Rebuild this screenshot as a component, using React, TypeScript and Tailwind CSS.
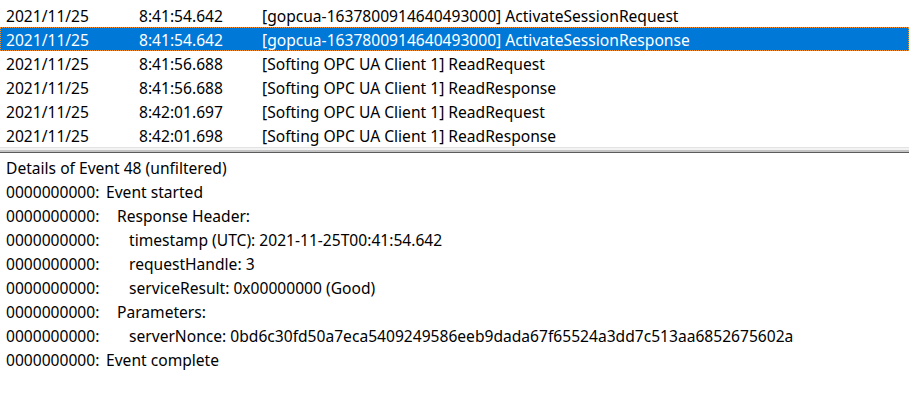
import React from "react";

const rows = [
  ["2021/11/25", "8:41:54.642", "[gopcua-1637800914640493000] ActivateSessionRequest"],
  ["2021/11/25", "8:41:54.642", "[gopcua-1637800914640493000] ActivateSessionResponse"],
  ["2021/11/25", "8:41:56.688", "[Softing OPC UA Client 1] ReadRequest"],
  ["2021/11/25", "8:41:56.688", "[Softing OPC UA Client 1] ReadResponse"],
  ["2021/11/25", "8:42:01.697", "[Softing OPC UA Client 1] ReadRequest"],
  ["2021/11/25", "8:42:01.698", "[Softing OPC UA Client 1] ReadResponse"],
];

const details: [number, string][] = [
  [0, "Event started"],
  [1, "Response Header:"],
  [2, "timestamp (UTC): 2021-11-25T00:41:54.642"],
  [2, "requestHandle: 3"],
  [2, "serviceResult: 0x00000000 (Good)"],
  [1, "Parameters:"],
  [2, "serverNonce: 0bd6c30fd50a7eca5409249586eeb9dada67f65524a3dd7c513aa6852675602a"],
  [0, "Event complete"],
];

export default function App() {
  return (
    <div
      className="w-[909px] h-[400px] bg-white text-black text-[15.6px] overflow-hidden"
      style={{ fontFamily: '"Noto Sans", "Noto Sans CJK SC", sans-serif' }}
    >
      <div className="pt-[3px]">
        {rows.map((r, i) => {
          const sel = i === 1;
          return (
            <div
              key={i}
              className={
                "h-[24px] pt-[4px] flex items-center whitespace-nowrap " +
                (sel
                  ? "bg-[#0078d7] text-white border border-dotted border-[#f5902a]"
                  : "border border-transparent")
              }
            >
              <div className="w-[138px] pl-[5px] shrink-0">{r[0]}</div>
              <div className="w-[123px] shrink-0">{r[1]}</div>
              <div>{r[2]}</div>
            </div>
          );
        })}
      </div>
      <div className="flex flex-col">
        <div className="h-[1px] bg-[#e3e3e3]" />
        <div className="h-[2px] bg-[#f3f3f3]" />
        <div className="h-[2px] bg-[#c4c4c4]" />
        <div className="h-[1px] bg-[#5b5b5b]" />
      </div>
      <div className="pt-[2px] pl-[6px]">
        <div className="h-[24px] pt-[4px] flex items-center whitespace-nowrap">Details of Event 48 (unfiltered)</div>
        {details.map(([lvl, txt], i) => (
          <div key={i} className="h-[24px] pt-[4px] flex items-center whitespace-nowrap">
            <span className="inline-block w-[94px] shrink-0">0000000000:</span>
            <span
              className={
                lvl === 0 ? "ml-[6px]" : lvl === 1 ? "ml-[17px]" : "ml-[29px]"
              }
            >
              {txt}
            </span>
          </div>
        ))}
      </div>
    </div>
  );
}
